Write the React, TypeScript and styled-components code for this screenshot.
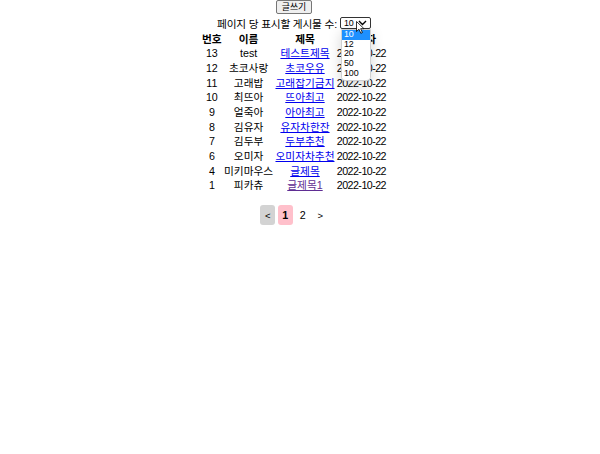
import styled, { createGlobalStyle } from 'styled-components';

const GlobalStyle = createGlobalStyle`
  html, body {
    margin: 0;
    padding: 0;
    background: #fff;
  }
  body {
    font-family: 'Liberation Sans', 'Noto Sans CJK KR', sans-serif;
    font-size: 10.7px;
    color: #000;
  }
`;

interface Post {
  id: number;
  name: string;
  title: string;
  date: string;
  visited?: boolean;
}

const posts: Post[] = [
  { id: 13, name: 'test', title: '테스트제목', date: '2022-10-22' },
  { id: 12, name: '초코사랑', title: '초코우유', date: '2022-10-22' },
  { id: 11, name: '고래밥', title: '고래잡기금지', date: '2022-10-22' },
  { id: 10, name: '최뜨아', title: '뜨아최고', date: '2022-10-22' },
  { id: 9, name: '얼죽아', title: '아아최고', date: '2022-10-22' },
  { id: 8, name: '김유자', title: '유자차한잔', date: '2022-10-22' },
  { id: 7, name: '김두부', title: '두부추천', date: '2022-10-22' },
  { id: 6, name: '오미자', title: '오미자차추천', date: '2022-10-22' },
  { id: 4, name: '미키마우스', title: '글제목', date: '2022-10-22' },
  { id: 1, name: '피카츄', title: '글제목1', date: '2022-10-22', visited: true },
];

const pageSizes = [10, 12, 20, 50, 100];

const App = () => {
  return (
    <>
      <GlobalStyle />
      <Page>
        <WriteButton type="button">글쓰기</WriteButton>
        <SizeRow>
          <Label>페이지 당 표시할 게시물 수:</Label>
          <SelectWrap>
            <SelectBox>
              <span>10</span>
              <svg width="9" height="6" viewBox="0 0 9 6">
                <path d="M1 1 L4.5 4.5 L8 1" fill="none" stroke="#000" strokeWidth="1.4" />
              </svg>
            </SelectBox>
            <OptionList>
              {pageSizes.map((size) => (
                <Option key={size} selected={size === 10}>
                  {size}
                </Option>
              ))}
            </OptionList>
            {/* mouse pointer hovering the open select */}
            <Cursor width="9" height="13" viewBox="0 0 9 13">
              <path
                d="M0.5 0.5 L0.5 10.5 L3 8.2 L4.8 12.3 L6.4 11.6 L4.7 7.7 L8 7.7 Z"
                fill="#fff"
                stroke="#000"
                strokeWidth="0.8"
                strokeLinejoin="round"
              />
            </Cursor>
          </SelectWrap>
        </SizeRow>
        <Table>
          <thead>
            <tr>
              <th>번호</th>
              <th>이름</th>
              <th>제목</th>
              <th>작성자</th>
            </tr>
          </thead>
          <tbody>
            {posts.map((post) => (
              <tr key={post.id}>
                <td>{post.id}</td>
                <td>{post.name}</td>
                <td>
                  <TitleLink href="#" visited={post.visited}>
                    {post.title}
                  </TitleLink>
                </td>
                <DateCell>{post.date}</DateCell>
              </tr>
            ))}
          </tbody>
        </Table>
        <Pagination>
          <PageButton kind="nav">&lt;</PageButton>
          <PageButton kind="active">1</PageButton>
          <PageButton kind="page">2</PageButton>
          <PageButton>&gt;</PageButton>
        </Pagination>
      </Page>
    </>
  );
};

export default App;

const Page = styled.div`
  display: flex;
  flex-direction: column;
  align-items: center;
  width: 588px;
  height: 454px;
`;

const WriteButton = styled.button`
  font-family: 'Liberation Sans', 'Noto Sans CJK KR', sans-serif;
  font-size: 8.9px;
  height: 14px;
  padding: 0 5px;
  margin: 0;
  border: 1px solid #767676;
  border-radius: 2px;
  background: #efefef;
  color: #000;
  line-height: 12px;
`;

const SizeRow = styled.div`
  display: flex;
  align-items: center;
  gap: 3px;
  height: 14px;
  margin-top: 2px;
`;

const Label = styled.span`
  letter-spacing: -0.2px;
`;

const SelectWrap = styled.div`
  position: relative;
`;

const SelectBox = styled.div`
  display: flex;
  align-items: center;
  justify-content: space-between;
  box-sizing: border-box;
  width: 31px;
  height: 12px;
  padding: 0 3px;
  border: 1px solid #333;
  border-radius: 2px;
  font-size: 8.9px;
  background: #fff;
`;

const OptionList = styled.ul`
  position: absolute;
  top: 12px;
  left: 1px;
  width: 28px;
  margin: 0;
  padding: 0 0 2px;
  list-style: none;
  background: #fff;
  border: 1px solid #d0d0d0;
  border-radius: 0 0 4px 4px;
  box-shadow: 0 4px 14px rgba(0, 0, 0, 0.16);
  z-index: 2;
`;

const Option = styled.li<{ selected?: boolean }>`
  font-size: 8.9px;
  height: 9.7px;
  line-height: 9.7px;
  padding-left: 2px;
  background: ${(p) => (p.selected ? '#1e90ff' : '#fff')};
  color: ${(p) => (p.selected ? '#fff' : '#000')};
`;

const Cursor = styled.svg`
  position: absolute;
  top: 4px;
  left: 16px;
  z-index: 3;
`;

const Table = styled.table`
  border-spacing: 1.33px;
  margin-top: 1px;

  th,
  td {
    padding: 0.67px;
    line-height: 12.35px;
    text-align: center;
    white-space: nowrap;
  }

  th {
    font-weight: bold;
  }
`;

const DateCell = styled.td`
  letter-spacing: -0.55px;
`;

const TitleLink = styled.a<{ visited?: boolean }>`
  color: ${(p) => (p.visited ? '#5f2d93' : '#0000ee')};
  text-decoration: underline;
`;

const Pagination = styled.div`
  display: flex;
  align-items: center;
  gap: 2.5px;
  margin-top: 12px;
`;

const PageButton = styled.span<{ kind?: 'nav' | 'active' | 'page' }>`
  display: flex;
  align-items: center;
  justify-content: center;
  width: 15px;
  height: 20px;
  border-radius: 3px;
  font-size: ${(p) => (p.kind === 'active' || p.kind === 'page' ? '10.7px' : '9.5px')};
  font-weight: ${(p) => (p.kind === 'active' ? 'bold' : 'normal')};
  background: ${(p) =>
    p.kind === 'nav' ? '#d3d3d3' : p.kind === 'active' ? '#ffc0cb' : 'transparent'};
  color: #000;
`;
